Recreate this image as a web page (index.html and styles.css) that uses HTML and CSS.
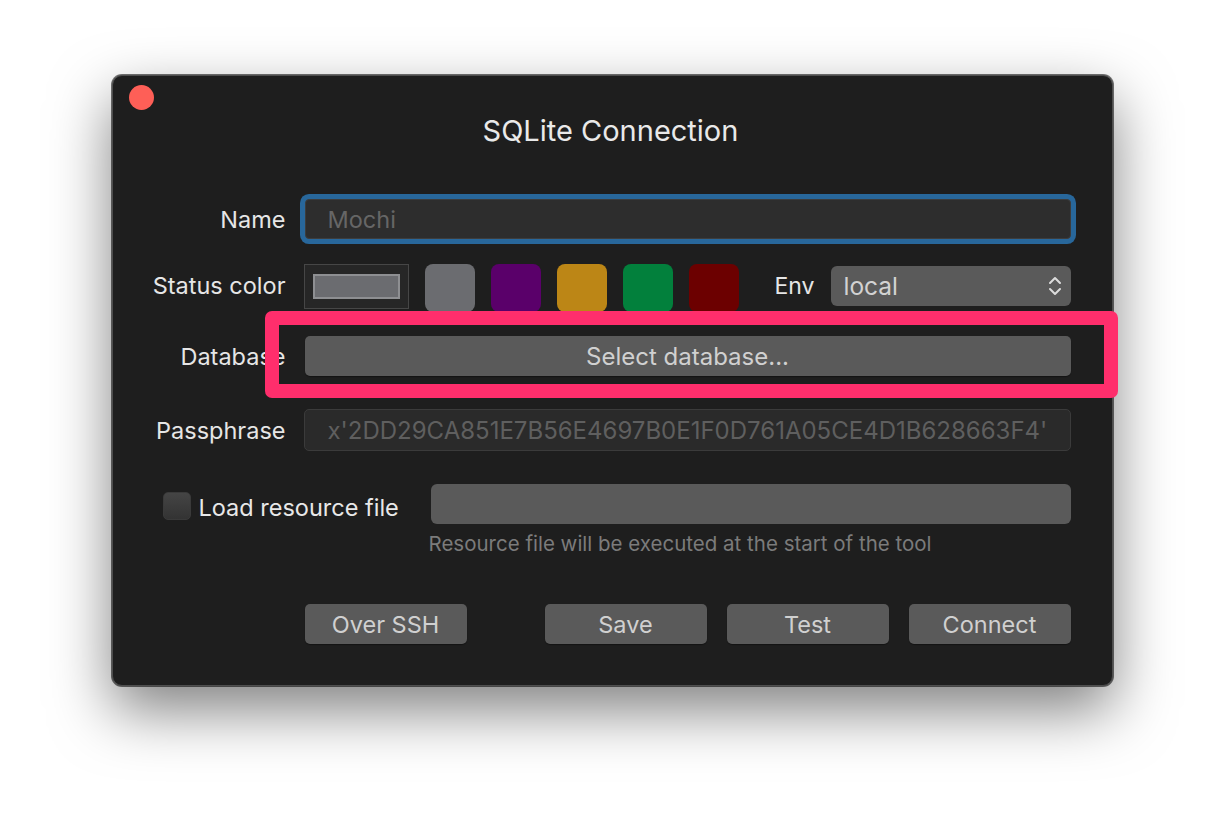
FILE: index.html
```html
<!DOCTYPE html>
<html lang="en">
<head>
    <meta charset="UTF-8">
    <title>SQLite Connection</title>
    <link rel="stylesheet" href="styles.css">
</head>
<body>
    <div class="window">
        <span class="close-btn"></span>
        <h1 class="title">SQLite Connection</h1>

        <div class="row row-name">
            <label class="label">Name</label>
            <div class="field-name"><span class="placeholder">Mochi</span></div>
        </div>

        <div class="row row-status">
            <label class="label">Status color</label>
            <div class="color-well"><span class="well-inner"></span></div>
            <span class="swatch sw-grey"></span>
            <span class="swatch sw-purple"></span>
            <span class="swatch sw-gold"></span>
            <span class="swatch sw-green"></span>
            <span class="swatch sw-red"></span>
            <span class="env-label">Env</span>
            <div class="select">
                <span>local</span>
                <svg class="chevrons" width="14" height="24" viewBox="0 0 14 24">
                    <path d="M2 9 L7 4 L12 9" fill="none" stroke="#dcdcdc" stroke-width="2" stroke-linecap="round" stroke-linejoin="round"/>
                    <path d="M2 15 L7 20 L12 15" fill="none" stroke="#dcdcdc" stroke-width="2" stroke-linecap="round" stroke-linejoin="round"/>
                </svg>
            </div>
        </div>

        <div class="row row-db">
            <label class="label">Database</label>
            <button class="btn btn-wide">Select database...</button>
        </div>

        <div class="row row-pass">
            <label class="label">Passphrase</label>
            <div class="field-pass">x'2DD29CA851E7B56E4697B0E1F0D761A05CE4D1B628663F4'</div>
        </div>

        <div class="row row-resource">
            <span class="checkbox"></span>
            <span class="check-label">Load resource file</span>
            <div class="file-field"></div>
        </div>
        <p class="help">Resource file will be executed at the start of the tool</p>

        <div class="actions">
            <button class="btn">Over SSH</button>
            <div class="actions-right">
                <button class="btn">Save</button>
                <button class="btn">Test</button>
                <button class="btn">Connect</button>
            </div>
        </div>

        <div class="highlight"></div>
    </div>
</body>
</html>
```

FILE: styles.css
```css
html, body {
    min-height: 100vh;
}
body {
    margin: 0;
    padding-top: 75px;
    box-sizing: border-box;
    background: #ffffff;
    font-family: Inter, "Noto Sans", sans-serif;
}
.window {
    position: relative;
    box-sizing: border-box;
    width: 1001px;
    height: 611px;
    margin: 0 auto;
    padding: 0 41px 0 38px;
    background: #1e1e1e;
    border: 1px solid #4e4e4e;
    border-radius: 10px;
    box-shadow: 0 0 0 1px rgba(0, 0, 0, 0.55), 0 24px 60px rgba(0, 0, 0, 0.5);
}
.close-btn {
    position: absolute;
    left: 16px;
    top: 9px;
    width: 25px;
    height: 25px;
    border-radius: 50%;
    background: #fe5f57;
}
.title {
    margin: 0;
    padding-top: 38px;
    font-size: 29px;
    line-height: 34px;
    font-weight: 400;
    color: #e9e9e9;
    text-align: center;
}
.row {
    display: flex;
    align-items: center;
}
.label {
    width: 135px;
    margin-right: 18px;
    flex-shrink: 0;
    text-align: right;
    font-size: 23.5px;
    color: #e6e6e6;
    white-space: nowrap;
}
.row-name {
    margin-top: 51px;
}
.field-name {
    box-sizing: border-box;
    flex: 1;
    height: 40px;
    margin-left: 1px;
    padding-left: 22px;
    display: flex;
    align-items: center;
    background: #2d2d2d;
    border: 1px solid #3d3d3d;
    border-radius: 4px;
    box-shadow: 0 0 0 5px #28679b;
}
.placeholder {
    font-size: 23.5px;
    color: #666666;
}
.row-status {
    margin-top: 25px;
    height: 48px;
    align-items: flex-start;
}
.row-status .label {
    margin-top: 7px;
}
.color-well {
    box-sizing: border-box;
    width: 105px;
    height: 45px;
    padding: 9px 8px;
    border: 1px solid #464646;
    background: #262626;
}
.well-inner {
    display: block;
    box-sizing: border-box;
    height: 100%;
    background: #6b6c70;
    border: 2px solid #8e8f92;
}
.swatch {
    width: 50px;
    height: 48px;
    margin-left: 16px;
    border-radius: 8px;
}
.sw-grey { background: #6b6c70; }
.sw-purple { background: #5a006a; }
.sw-gold { background: #bc8616; }
.sw-green { background: #02803c; }
.sw-red { background: #6c0000; }
.env-label {
    margin: 8px 0 0 36px;
    font-size: 23px;
    color: #e6e6e6;
}
.select {
    box-sizing: border-box;
    width: 240px;
    height: 40px;
    margin: 2px 0 0 auto;
    padding: 0 9px 0 13px;
    display: flex;
    align-items: center;
    justify-content: space-between;
    background: #5a5a5a;
    border-radius: 6px;
    font-size: 24.5px;
    color: #d2d2d2;
}
.btn {
    box-sizing: border-box;
    height: 40px;
    padding: 0;
    border: none;
    border-radius: 5px;
    background: #5a5a5a;
    color: #d0d0d0;
    font-family: inherit;
    font-size: 23.5px;
    box-shadow: 0 1px 1px rgba(0, 0, 0, 0.35);
}
.row-db {
    margin-top: 24px;
}
.btn-wide {
    flex: 1;
    margin-left: 1px;
    font-size: 24px;
}
.row-pass {
    margin-top: 33px;
}
.field-pass {
    box-sizing: border-box;
    flex: 1;
    height: 42px;
    padding-left: 23px;
    display: flex;
    align-items: center;
    background: #2a2a2a;
    border: 1px solid #3b3b3b;
    border-radius: 5px;
    font-size: 24px;
    color: #5f5f5f;
    white-space: nowrap;
    overflow: hidden;
}
.row-resource {
    margin-top: 33px;
}
.checkbox {
    box-sizing: border-box;
    width: 28px;
    height: 28px;
    margin: 3px 0 0 12px;
    border-radius: 5px;
    background: linear-gradient(#454545, #333333);
    border: 1px solid #3a3a3a;
}
.check-label {
    margin: 6px 0 0 8px;
    font-size: 23.5px;
    color: #e8e8e8;
}
.file-field {
    flex: 0 0 640px;
    height: 40px;
    margin-left: auto;
    background: #5a5a5a;
    border-radius: 6px;
}
.help {
    margin: 8px 0 0 278px;
    font-size: 20.5px;
    line-height: 24px;
    color: #7b7b7b;
}
.actions {
    margin: 48px 0 0 154px;
    display: flex;
    justify-content: space-between;
}
.actions .btn {
    width: 162px;
}
.actions-right {
    display: flex;
    gap: 20px;
}
.highlight {
    position: absolute;
    left: 152px;
    top: 235px;
    box-sizing: border-box;
    width: 853px;
    height: 87px;
    border: 14px solid #ff2e6c;
    border-radius: 7px;
}
```
